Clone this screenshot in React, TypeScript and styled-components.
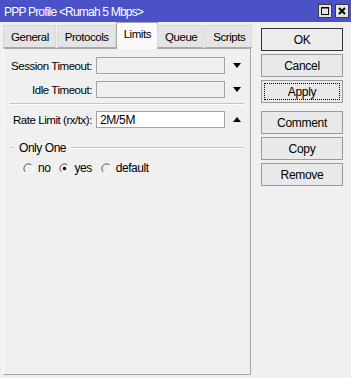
import React from 'react';
import styled, { createGlobalStyle } from 'styled-components';

const GlobalStyle = createGlobalStyle`
  html, body {
    margin: 0;
    padding: 0;
    background: #f0f0f0;
  }
  body {
    font-family: "Liberation Sans", Arial, sans-serif;
    font-size: 11.5px;
    letter-spacing: -0.45px;
    color: #000;
  }
`;

const Window = styled.div`
  width: 351px;
  height: 378px;
  display: flex;
  flex-direction: column;
  background: #f0f0f0;
  overflow: hidden;
`;

const TitleBar = styled.div`
  height: 22px;
  flex: none;
  background: #4b52c7;
  display: flex;
  align-items: center;
  padding: 0 2px 0 4px;
  box-sizing: border-box;
`;

const Title = styled.div`
  flex: 1;
  color: #fff;
  font-size: 12px;
  letter-spacing: -0.8px;
  padding-top: 2px;
`;

const TitleButtons = styled.div`
  display: flex;
  gap: 3px;
`;

const TitleButton = styled.div`
  width: 14px;
  height: 14px;
  box-sizing: border-box;
  background: #e6e6e6;
  border: 1px solid #3a3a3a;
  display: flex;
  align-items: center;
  justify-content: center;
`;

const Body = styled.div`
  flex: 1;
  display: flex;
  gap: 10px;
  padding: 0 0 3px 3px;
`;

const TabArea = styled.div`
  width: 248px;
  display: flex;
  flex-direction: column;
`;

const TabStrip = styled.div`
  height: 26px;
  display: flex;
  align-items: flex-end;
  position: relative;
  z-index: 1;
`;

const Tab = styled.div<{ $active?: boolean }>`
  box-sizing: border-box;
  padding: 0 6px 0 7px;
  height: ${({ $active }) => ($active ? '27px' : '23px')};
  margin: ${({ $active }) => ($active ? '0 -1px -1px -1px' : '0 1px 0 0')};
  padding-bottom: ${({ $active }) => ($active ? '4px' : '0')};
  background: ${({ $active }) => ($active ? '#fafafa' : '#e4e4e4')};
  border: 1px solid ${({ $active }) => ($active ? '#a9a9a9' : '#dadada')};
  border-bottom: ${({ $active }) => ($active ? 'none' : '1px solid #a9a9a9')};
  display: flex;
  align-items: center;
  white-space: nowrap;
`;

const Panel = styled.div`
  flex: 1;
  box-sizing: border-box;
  border: 1px solid #a6a6a6;
  border-left-color: #fdfdfd;
  border-top-color: #a9a9a9;
  padding: 8px 6px 0 1px;
  display: flex;
  flex-direction: column;
`;

const FieldRow = styled.div`
  display: flex;
  align-items: center;
  height: 17px;
  margin-bottom: 7px;
`;

const Label = styled.div`
  width: 87px;
  text-align: right;
  white-space: nowrap;
  margin-right: 4px;
`;

const Input = styled.div<{ $filled?: boolean }>`
  width: 129px;
  height: 17px;
  box-sizing: border-box;
  border: 1px solid #a3a3a3;
  background: ${({ $filled }) => ($filled ? '#fff' : '#f0f0f0')};
  font-size: 12px;
  letter-spacing: -0.3px;
  padding: 1px 0 0 3px;
  line-height: 14px;
`;

const Arrow = styled.div<{ $up?: boolean }>`
  margin-left: 8px;
  width: 0;
  height: 0;
  border-left: 4px solid transparent;
  border-right: 4px solid transparent;
  ${({ $up }) => ($up ? 'border-bottom: 5px solid #000;' : 'border-top: 5px solid #000;')}
`;

const Separator = styled.div`
  margin: -2px 0 6px 5px;
  height: 0;
  border-top: 1px solid #c4c4c4;
  border-bottom: 1px solid #fff;
`;

const GroupHeader = styled.div`
  display: flex;
  align-items: center;
  margin: 6px 0 0 5px;
  height: 14px;
`;

const GroupLine = styled.div<{ $short?: boolean }>`
  height: 0;
  border-top: 1px solid #c4c4c4;
  border-bottom: 1px solid #fff;
  ${({ $short }) => ($short ? 'width: 4px;' : 'flex: 1;')}
`;

const GroupTitle = styled.div`
  padding: 0 5px;
  font-size: 12px;
`;

const RadioRow = styled.div`
  display: flex;
  align-items: center;
  gap: 9px;
  margin: 6px 0 0 18px;
`;

const RadioItem = styled.div`
  display: flex;
  align-items: center;
  gap: 4px;
  font-size: 12px;
`;

const ButtonColumn = styled.div`
  width: 82px;
  display: flex;
  flex-direction: column;
  padding-top: 6px;
`;

const Button = styled.div<{ $default?: boolean; $focus?: boolean; $gap?: number }>`
  height: 23px;
  box-sizing: border-box;
  margin-bottom: ${({ $gap }) => $gap ?? 3}px;
  border: 1px solid ${({ $default }) => ($default ? '#333' : '#9a9a9a')};
  background: ${({ $default }) => ($default ? '#ececec' : '#e9e9e9')};
  display: flex;
  align-items: center;
  justify-content: center;
  font-size: 12px;
  letter-spacing: -0.3px;
  position: relative;
  ${({ $focus }) =>
    $focus
      ? `&::after {
    content: '';
    position: absolute;
    inset: 2px;
    border: 1px dotted #000;
  }`
      : ''}
`;

function Radio({ checked }: { checked?: boolean }) {
  return (
    <svg width="11" height="11" viewBox="0 0 11 11">
      <path d="M8.5 2 A4.5 4.5 0 1 0 2.5 9" fill="none" stroke="#555" strokeWidth="1" />
      <path d="M2.5 9 A4.5 4.5 0 0 0 8.5 2" fill="none" stroke="#ffffff" strokeWidth="1" />
      {checked && <circle cx="5.5" cy="5.5" r="1.7" fill="#000" />}
    </svg>
  );
}

const tabs = ['General', 'Protocols', 'Limits', 'Queue', 'Scripts'];

export default function App() {
  return (
    <>
      <GlobalStyle />
      <Window>
        <TitleBar>
          <Title>PPP Profile &lt;Rumah 5 Mbps&gt;</Title>
          <TitleButtons>
            <TitleButton>
              <svg width="10" height="10" viewBox="0 0 10 10">
                <rect x="1.5" y="1.5" width="7" height="7" fill="none" stroke="#000" strokeWidth="1" />
                <line x1="1" y1="2" x2="9" y2="2" stroke="#000" strokeWidth="1" />
              </svg>
            </TitleButton>
            <TitleButton>
              <svg width="10" height="10" viewBox="0 0 10 10">
                <path d="M2 2 L8 8 M8 2 L2 8" stroke="#000" strokeWidth="2" />
              </svg>
            </TitleButton>
          </TitleButtons>
        </TitleBar>
        <Body>
          <TabArea>
            <TabStrip>
              {tabs.map((t) => (
                <Tab key={t} $active={t === 'Limits'}>
                  {t}
                </Tab>
              ))}
            </TabStrip>
            <Panel>
              <FieldRow>
                <Label>Session Timeout:</Label>
                <Input />
                <Arrow />
              </FieldRow>
              <FieldRow>
                <Label>Idle Timeout:</Label>
                <Input />
                <Arrow />
              </FieldRow>
              <Separator />
              <FieldRow>
                <Label>Rate Limit (rx/tx):</Label>
                <Input $filled>2M/5M</Input>
                <Arrow $up />
              </FieldRow>
              <GroupHeader>
                <GroupLine $short />
                <GroupTitle>Only One</GroupTitle>
                <GroupLine />
              </GroupHeader>
              <RadioRow>
                <RadioItem>
                  <Radio />
                  no
                </RadioItem>
                <RadioItem>
                  <Radio checked />
                  yes
                </RadioItem>
                <RadioItem>
                  <Radio />
                  default
                </RadioItem>
              </RadioRow>
            </Panel>
          </TabArea>
          <ButtonColumn>
            <Button $default>OK</Button>
            <Button>Cancel</Button>
            <Button $focus $gap={8}>Apply</Button>
            <Button>Comment</Button>
            <Button>Copy</Button>
            <Button>Remove</Button>
          </ButtonColumn>
        </Body>
      </Window>
    </>
  );
}
